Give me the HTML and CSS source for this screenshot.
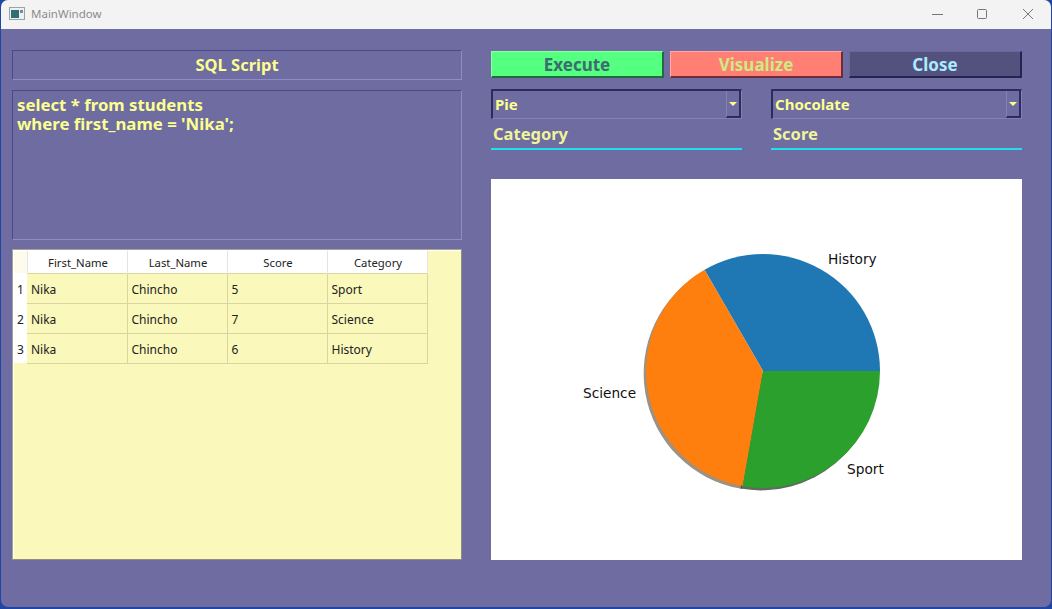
FILE: index.html
```html
<!DOCTYPE html>
<html lang="en">
<head>
  <meta charset="UTF-8">
  <title>MainWindow</title>
  <link rel="stylesheet" href="styles.css">
</head>
<body>
  <div class="window">
    <div class="titlebar">
      <svg class="app-icon" width="16" height="13" viewBox="0 0 16 13">
        <rect x="0.5" y="0.5" width="15" height="12" fill="#eef1f1" stroke="#9aa3a3"/>
        <rect x="2" y="3" width="8" height="8" fill="#2f6f74"/>
        <rect x="11" y="3" width="3" height="3" fill="#7d8a8c"/>
      </svg>
      <span class="title">MainWindow</span>
      <div class="win-btns">
        <svg width="12" height="12" viewBox="0 0 12 12"><path d="M0 6.5h11" stroke="#777" fill="none"/></svg>
        <svg width="12" height="12" viewBox="0 0 12 12"><rect x="0.5" y="1.5" width="9" height="9" rx="1" stroke="#777" fill="none"/></svg>
        <svg width="12" height="12" viewBox="0 0 12 12"><path d="M1 1l10 10M11 1L1 11" stroke="#777" fill="none"/></svg>
      </div>
    </div>

    <div class="content">
      <div class="left">
        <div class="script-title">SQL Script</div>
        <textarea class="script-box" readonly>select * from students
where first_name = 'Nika';</textarea>
        <div class="table-box">
          <table class="results">
            <thead>
              <tr><th class="corner"></th><th>First_Name</th><th>Last_Name</th><th>Score</th><th>Category</th></tr>
            </thead>
            <tbody>
              <tr><th>1</th><td>Nika</td><td>Chincho</td><td>5</td><td>Sport</td></tr>
              <tr><th>2</th><td>Nika</td><td>Chincho</td><td>7</td><td>Science</td></tr>
              <tr><th>3</th><td>Nika</td><td>Chincho</td><td>6</td><td>History</td></tr>
            </tbody>
          </table>
        </div>
      </div>

      <div class="right">
        <div class="buttons">
          <button class="btn execute">Execute</button>
          <button class="btn visualize">Visualize</button>
          <button class="btn close">Close</button>
        </div>
        <div class="fields">
          <div class="field">
            <div class="combo"><span class="combo-text">Pie</span><span class="arrow"><i></i></span></div>
            <div class="field-label">Category</div>
          </div>
          <div class="field">
            <div class="combo"><span class="combo-text">Chocolate</span><span class="arrow"><i></i></span></div>
            <div class="field-label">Score</div>
          </div>
        </div>
        <div class="chart">
          <svg width="531" height="381" viewBox="0 0 531 381">
            <g transform="translate(272 192)">
              <!-- shadows, moved a bit left and down -->
              <g transform="translate(-2.4 2.4)">
                <path d="M0 0L-58.5-101.3A117 117 0 0 0-20.3 115.2Z" fill="#9c9183"/>
                <path d="M0 0L-20.3 115.2A117 117 0 0 0 117 0Z" fill="#5e6b5e"/>
              </g>
              <path d="M0 0L117 0A117 117 0 0 0-58.5-101.3Z" fill="#1f77b4"/>
              <path d="M0 0L-58.5-101.3A117 117 0 0 0-20.3 115.2Z" fill="#ff7f0e"/>
              <path d="M0 0L-20.3 115.2A117 117 0 0 0 117 0Z" fill="#2ca02c"/>
              <path d="M-21.5 114.5l-0.5 3.4" stroke="#444" stroke-width="1" fill="none"/>
            </g>
            <text class="pie-label" x="337" y="85">History</text>
            <text class="pie-label" x="92" y="219">Science</text>
            <text class="pie-label" x="356" y="295">Sport</text>
          </svg>
        </div>
      </div>
    </div>
  </div>
</body>
</html>
```

FILE: styles.css
```css
html, body {
  margin: 0;
  height: 100%;
}
body {
  background: #1d46a5;
  font-family: "Noto Sans", sans-serif;
  overflow: hidden;
}
.window {
  height: 607px;
  margin: 0 1px;
  background: #6f6ca2;
  border-radius: 7px;
  display: flex;
  flex-direction: column;
  overflow: hidden;
}
.titlebar {
  height: 29px;
  box-sizing: border-box;
  flex: none;
  background: #f3f3f3;
  display: flex;
  align-items: center;
  padding: 0 0 2px 8px;
  gap: 6px;
}
.title {
  font-size: 11.5px;
  color: #8b8b8b;
}
.win-btns {
  margin-left: auto;
  width: 102px;
  padding-right: 17px;
  display: flex;
  justify-content: space-between;
}
.content {
  flex: 1;
  display: flex;
  gap: 29px;
  padding: 21px 29px 47px 11px;
}
.left {
  width: 450px;
  display: flex;
  flex-direction: column;
  gap: 9px;
}
.right {
  width: 531px;
  display: flex;
  flex-direction: column;
}
.script-title {
  height: 28px;
  border: 1px solid;
  border-color: #4a4889 #8f8dc6 #8f8dc6 #4a4889;
  color: #fbff8f;
  font-size: 16.5px;
  font-weight: bold;
  text-align: center;
  line-height: 28px;
}
.script-box {
  height: 140px;
  margin: 1px 0 0;
  resize: none;
  overflow: hidden;
  outline: none;
  background: none;
  border: 1px solid;
  border-color: #4a4889 #8f8dc6 #8f8dc6 #4a4889;
  padding: 4px;
  color: #fbff8f;
  font-family: inherit;
  font-size: 16.8px;
  font-weight: bold;
  line-height: 19px;
}
.table-box {
  flex: 1;
  background: #faf8bb;
  border: 1px solid;
  border-color: #a3a394 #8f8f80 #8f8f80 #a3a394;
  box-shadow: inset 1px 1px 0 #fff;
  padding: 1px 0 0 1px;
}
.results {
  border-collapse: collapse;
  table-layout: fixed;
  width: 413px;
  font-size: 12px;
  color: #222;
}
.results th {
  box-sizing: border-box;
  background: #fff;
  font-weight: normal;
  font-size: 11.3px;
  height: 22px;
  width: 100px;
  padding: 2px 0 0 2px;
  border-right: 1px solid #e4e4e4;
}
.results th.corner {
  background: #fdfcec;
  width: 13px;
}
.results tbody th {
  font-size: 12px;
  height: 30px;
  padding: 3px 0 0;
  border: none;
}
.results td {
  box-sizing: border-box;
  height: 30px;
  padding: 3px 3px 0 4px;
  border: 1px solid #d8d5a0;
  border-left: none;
}
.buttons {
  display: flex;
  gap: 6px;
  margin-top: 1px;
}
.btn {
  flex: 1;
  height: 27px;
  border: 1px solid;
  border-width: 1px 2px 2px 1px;
  padding: 2px 0 0;
  font-family: inherit;
  font-size: 17px;
  font-weight: bold;
  line-height: 22px;
}
.execute {
  background: #55ff7f;
  color: #3d6b72;
  border-color: #8dffa9 #1f6a3e #1f6a3e #8dffa9;
}
.visualize {
  background: #ff7f75;
  color: #cdeb7f;
  border-color: #ffaba5 #6e2c3a #6e2c3a #ffaba5;
}
.close {
  background: #55517f;
  color: #a8edff;
  border-color: #6b6899 #25234f #25234f #6b6899;
}
.fields {
  display: flex;
  justify-content: space-between;
  margin-top: 11px;
}
.field {
  width: 251px;
}
.combo {
  height: 27px;
  border-style: solid;
  border-width: 2px 1px 1px 2px;
  border-color: #2d2b5e #8280b5 #8280b5 #2d2b5e;
  display: flex;
  align-items: center;
  justify-content: space-between;
  padding-left: 2px;
  color: #fbff8f;
  font-size: 15px;
  font-weight: bold;
}
.combo-text {
  margin-bottom: 1px;
}
.arrow {
  width: 15px;
  height: 27px;
  box-sizing: border-box;
  border-style: solid;
  border-width: 0 2px 2px 1px;
  border-color: #8280b5 #2d2b5e #2d2b5e #8280b5;
  display: flex;
  align-items: center;
  justify-content: center;
}
.arrow i {
  width: 0;
  height: 0;
  border: 4px solid transparent;
  border-top-color: #fbff8f;
  border-bottom: none;
}
.field-label {
  height: 31px;
  box-sizing: border-box;
  border-bottom: 2px solid #1fe0f0;
  padding-left: 2px;
  color: #f0f59a;
  font-size: 16.5px;
  font-weight: bold;
  line-height: 29px;
}
.chart {
  margin-top: 29px;
  height: 381px;
  background: #fff;
}
.pie-label {
  font-family: "DejaVu Sans", sans-serif;
  font-size: 13.7px;
  fill: #111;
}
```
